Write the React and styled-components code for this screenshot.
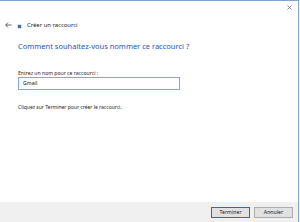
import React from "react";
import styled, { createGlobalStyle } from "styled-components";

const GlobalStyle = createGlobalStyle`
  html, body {
    margin: 0;
    padding: 0;
    background: #ffffff;
  }
  body {
    font-family: "Noto Sans", "Open Sans", sans-serif;
  }
`;

const Window = styled.div`
  width: 299px;
  height: 222px;
  box-sizing: border-box;
  display: flex;
  flex-direction: column;
  background: #fff;
  border-top: 1px solid #7ea4d8;
  border-right: 1px solid #7ea4d8;
`;

const TitleBar = styled.div`
  display: flex;
  justify-content: flex-end;
  height: 13px;
  padding: 4px 6px 0 0;
  box-sizing: border-box;
`;

const NavRow = styled.div`
  display: flex;
  align-items: center;
  height: 14px;
  margin-top: 4px;
  padding-left: 5px;
`;

const WizardIcon = styled.span`
  width: 3px;
  height: 3px;
  margin: 2px 6px 0 6px;
  background: #3c6fc0;
  box-shadow: 0 0 0 0.5px #b8c6d8;
`;

const WizardTitle = styled.span`
  font-size: 5.9px;
  color: #222;
`;

const Body = styled.div`
  flex: 1;
  display: flex;
  flex-direction: column;
  padding-left: 18px;
`;

const Heading = styled.div`
  font-size: 7.5px;
  line-height: 10px;
  color: #1e58b0;
  margin-top: 9px;
`;

const Label = styled.div`
  font-size: 5.1px;
  line-height: 7px;
  color: #222;
  margin-top: 19px;
`;

const Input = styled.div`
  width: 156px;
  height: 11px;
  margin-top: 0;
  border: 1px solid #7ea9e0;
  font-size: 5.2px;
  line-height: 11px;
  padding-left: 4px;
  color: #111;
`;

const Note = styled.div`
  font-size: 5px;
  line-height: 7px;
  color: #222;
  margin-top: 14px;
`;

const Footer = styled.div`
  height: 20px;
  background: #f0f0f0;
  display: flex;
  justify-content: flex-end;
  align-items: center;
  gap: 4px;
  padding-right: 5px;
`;

const Button = styled.button`
  width: 39px;
  height: 11px;
  box-sizing: border-box;
  padding: 0;
  margin: 0;
  font-family: "Noto Sans", sans-serif;
  font-size: 5.2px;
  color: #222;
  background: #e1e1e1;
  border: 1px solid ${(p) => (p.$primary ? "#0078d7" : "#adadad")};
`;

const BackArrow = () => (
  <svg width="7" height="6" viewBox="0 0 7 6">
    <path d="M3 0.5 L0.7 3 L3 5.5 M0.7 3 H6.5" fill="none" stroke="#444" strokeWidth="0.8" />
  </svg>
);

const CloseIcon = () => (
  <svg width="5" height="5" viewBox="0 0 5 5">
    <path d="M0.5 0.5 L4.5 4.5 M4.5 0.5 L0.5 4.5" stroke="#555" strokeWidth="0.7" />
  </svg>
);

export default function App() {
  return (
    <>
      <GlobalStyle />
      <Window>
        <TitleBar>
          <CloseIcon />
        </TitleBar>
        <NavRow>
          <BackArrow />
          <WizardIcon />
          <WizardTitle>Créer un raccourci</WizardTitle>
        </NavRow>
        <Body>
          <Heading>Comment souhaitez-vous nommer ce raccourci ?</Heading>
          <Label>Entrez un nom pour ce raccourci :</Label>
          <Input>Gmail</Input>
          <Note>Cliquez sur Terminer pour créer le raccourci.</Note>
        </Body>
        <Footer>
          <Button $primary>Terminer</Button>
          <Button>Annuler</Button>
        </Footer>
      </Window>
    </>
  );
}
